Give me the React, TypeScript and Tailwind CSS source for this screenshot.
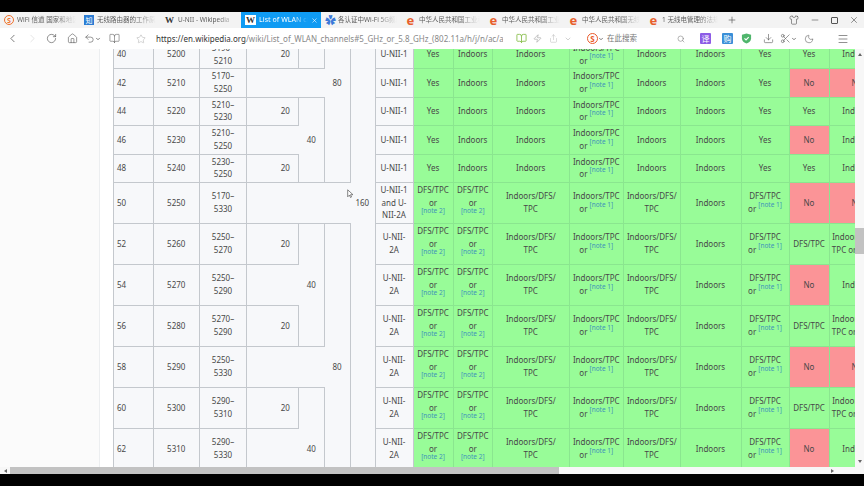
import type { ReactNode } from "react";
import {
  BookOpen,
  ChevronDown,
  ChevronLeft,
  ChevronRight,
  Download,
  Home,
  Menu,
  Minus,
  Moon,
  Plus,
  RotateCw,
  Scissors,
  Search,
  Share,
  Shirt,
  Star,
  Undo2,
  X,
  Zap,
} from "lucide-react";

const UI_FONT = "font-['Noto_Sans','Noto_Sans_CJK_SC',sans-serif]";

function SogouLogo() {
  return (
    <span className="flex h-[10px] w-[10px] shrink-0 items-center justify-center rounded-full border border-[#f0702a] text-[7px] font-bold leading-none text-[#f0702a]">
      S
    </span>
  );
}

function EdgeLogo() {
  return (
    <span className="w-[11px] shrink-0 text-center text-[13px] font-bold leading-none text-[#e8602c]">
      e
    </span>
  );
}

function WikiLogo({ boxed }: { boxed?: boolean }) {
  return (
    <span
      className={`flex h-[10px] w-[11px] shrink-0 items-center justify-center font-['Liberation_Serif',serif] text-[9px] font-bold leading-none text-[#333] ${boxed ? "bg-white" : ""}`}
    >
      W
    </span>
  );
}

const tabs: { icon: ReactNode; title: string; width: string }[] = [
  { icon: <SogouLogo />, title: "WiFi 信道 国家和地区频段", width: "w-[80px]" },
  {
    icon: (
      <span className="flex h-[10px] w-[10px] shrink-0 items-center justify-center bg-[#2b7cd3] text-[7px] leading-none text-white">
        知
      </span>
    ),
    title: "无线路由器的工作原理",
    width: "w-[80px]",
  },
  { icon: <WikiLogo />, title: "U-NII - Wikipedia", width: "w-[81px]" },
  { icon: null, title: "", width: "" },
  {
    icon: <span className="w-[10px] shrink-0 text-[11px] leading-none text-[#3b78d8]">✿</span>,
    title: "各认证中Wi-Fi 5G频段",
    width: "w-[80px]",
  },
  { icon: <EdgeLogo />, title: "中华人民共和国工业和", width: "w-[83px]" },
  { icon: <EdgeLogo />, title: "中华人民共和国工业和", width: "w-[80px]" },
  { icon: <EdgeLogo />, title: "中华人民共和国无线电", width: "w-[80px]" },
  { icon: <EdgeLogo />, title: "1 无线电管理的法规", width: "w-[78px]" },
];

function TabBar() {
  return (
    <div className={`flex h-[16px] items-center bg-[#f3f3f3] ${UI_FONT}`}>
      {tabs.map((tab, i) =>
        tab.title ? (
          <div key={i} className={`flex h-full items-center gap-[3px] pl-[4px] pr-[4px] ${tab.width}`}>
            {tab.icon}
            <span className="min-w-0 flex-1 overflow-hidden whitespace-nowrap bg-gradient-to-r from-[#555] from-65% to-transparent bg-clip-text text-[6.500px] leading-[10px] text-transparent">
              {tab.title}
            </span>
          </div>
        ) : (
          <div key={i} className="flex h-full w-[80px] items-center gap-[3px] bg-[#0f9bf3] pl-[4px] pr-[3px]">
            <WikiLogo boxed />
            <span className="min-w-0 flex-1 overflow-hidden whitespace-nowrap bg-gradient-to-r from-white from-70% to-transparent bg-clip-text text-[7px] font-medium leading-[10px] text-transparent">
              List of WLAN channels
            </span>
            <X className="h-[7px] w-[7px] shrink-0 text-white" strokeWidth={2} />
          </div>
        ),
      )}
      <Plus className="ml-[5px] h-[10px] w-[10px] text-[#555]" strokeWidth={1.6} />
      <div className="ml-auto flex items-center gap-[11px] pr-[5px] text-[#555]">
        <Shirt className="h-[10px] w-[10px]" strokeWidth={1.5} />
        <Minus className="h-[10px] w-[10px]" strokeWidth={1.5} />
        <span className="h-[7px] w-[7px] rounded-[1px] border border-[#555]" />
        <X className="h-[10px] w-[10px]" strokeWidth={1.5} />
      </div>
    </div>
  );
}

function ToolBar() {
  return (
    <div className={`flex h-[21px] items-center bg-white pl-[6px] text-[#555] ${UI_FONT}`}>
      <ChevronLeft className="h-[13px] w-[13px]" strokeWidth={1.4} />
      <ChevronRight className="ml-[7px] h-[13px] w-[13px] text-[#ddd]" strokeWidth={1.4} />
      <RotateCw className="ml-[7px] h-[11px] w-[11px]" strokeWidth={1.4} />
      <Home className="ml-[10px] h-[11px] w-[11px]" strokeWidth={1.3} />
      <Undo2 className="ml-[6px] h-[11px] w-[11px]" strokeWidth={1.3} />
      <ChevronDown className="h-[6px] w-[6px]" strokeWidth={3} />
      <BookOpen className="ml-[8px] h-[11px] w-[11px]" strokeWidth={1.2} />
      <Star className="ml-[16px] h-[10px] w-[10px] text-[#aaa]" strokeWidth={1.2} />
      <div className="ml-[10px] w-[347px] overflow-hidden whitespace-nowrap text-[8px] leading-[11px] text-[#888]">
        <span className="text-[#333]">https://en.wikipedia.org</span>
        /wiki/List_of_WLAN_channels#5_GHz_or_5.8_GHz_(802.11a/h/j/n/ac/ax)
      </div>
      <BookOpen className="ml-[13px] h-[11px] w-[11px] text-[#8cc152]" strokeWidth={2} />
      <Zap className="ml-[6px] h-[9px] w-[9px] text-[#999]" strokeWidth={1.5} />
      <Share className="ml-[7px] h-[9px] w-[9px] text-[#bbb]" strokeWidth={1.4} />
      <ChevronDown className="ml-[6px] h-[8px] w-[8px] text-[#aaa]" strokeWidth={1.6} />
      <span className="ml-[15px] flex h-[11px] w-[11px] items-center justify-center rounded-full border-[1.5px] border-[#ea5a2a] text-[8px] font-bold leading-none text-[#ea5a2a]">
        S
      </span>
      <ChevronDown className="h-[6px] w-[6px]" strokeWidth={3} />
      <span className="ml-[3px] w-[70px] text-[7.500px] leading-none text-[#777]">在此搜索</span>
      <Search className="h-[8px] w-[8px] text-[#777]" strokeWidth={1.6} />
      <span className="ml-[15px] flex h-[11px] w-[11px] items-center justify-center rounded-[1px] bg-[#8d5ce6] text-[8px] leading-none text-white">
        译
      </span>
      <span className="ml-[11px] flex h-[11px] w-[11px] items-center justify-center rounded-[1px] bg-[#3a8fd8] text-[8px] leading-none text-white">
        购
      </span>
      <svg viewBox="0 0 12 12" className="ml-[8px] h-[11px] w-[11px]">
        <path d="M6 .5 11 2v4c0 3-2.500 4.500-5 5.500C3.500 10.500 1 9 1 6V2z" fill="#4fb56c" />
        <path d="m3.800 5.800 1.700 1.700 2.900-3" fill="none" stroke="#fff" strokeWidth="1.300" />
      </svg>
      <Download className="ml-[11px] h-[11px] w-[11px]" strokeWidth={1.3} />
      <Scissors className="ml-[6px] h-[11px] w-[11px]" strokeWidth={1.3} />
      <ChevronDown className="h-[6px] w-[6px]" strokeWidth={3} />
      <Moon className="ml-[7px] h-[10px] w-[10px]" strokeWidth={1.3} />
      <Menu className="ml-[23px] h-[12px] w-[12px]" strokeWidth={1.3} />
    </div>
  );
}

const note = (n: number) => (
  <sup className="align-[2px] text-[6.500px] leading-none text-[#3f93b8]">[note&nbsp;{n}]</sup>
);

const indoors = "Indoors";
const indoorsTpc = (
  <>
    Indoors/TPC
    <br />
    or {note(1)}
  </>
);
const dfsNote1 = (
  <>
    DFS/TPC
    <br />
    or {note(1)}
  </>
);
const dfsNote2 = (
  <>
    DFS/TPC
    <br />
    or
    <br />
    {note(2)}
  </>
);
const indoorsDfs = (
  <>
    Indoors/DFS/
    <br />
    TPC
  </>
);
const indoorsDfsOr = (
  <>
    Indoors/DFS/
    <br />
    TPC or {note(1)}
  </>
);

const gray = "border-[#c4c8cd]";
const cellBase = `bg-[#f7f8fa] p-0 text-center ${gray}`;

function Green({ children }: { children: ReactNode }) {
  return <td className="border border-[#8ae68f] bg-[#98fc98] p-0 text-center">{children}</td>;
}

function No() {
  return <td className="border border-[#8ae68f] bg-[#fb9497] p-0 text-center">No</td>;
}

// the cells right of the width columns, and what the last two columns say
const uNii1 = (yes: boolean, key: number) => (
  <>
    <td className={`border ${cellBase}`}>U-NII-1</td>
    <Green>Yes</Green>
    <Green>{indoors}</Green>
    <Green>{indoors}</Green>
    <Green>{indoorsTpc}</Green>
    <Green>{indoors}</Green>
    <Green>{indoors}</Green>
    <Green>Yes</Green>
    {key === 42 ? <No /> : yes ? <Green>Yes</Green> : <No />}
    {key === 42 ? <No /> : <Green>{indoors}</Green>}
  </>
);

const uNii2 = (a: ReactNode, b: ReactNode, name: ReactNode = "U-NII-2A") => (
  <>
    <td className={`border px-[3px] ${cellBase}`}>{name}</td>
    <Green>{dfsNote2}</Green>
    <Green>{dfsNote2}</Green>
    <Green>{indoorsDfs}</Green>
    <Green>{indoorsTpc}</Green>
    <Green>{indoorsDfs}</Green>
    <Green>{indoors}</Green>
    <Green>{dfsNote1}</Green>
    {a}
    {b}
  </>
);

// cells in the width columns, stepped like the original table
const box20 = (
  <>
    <td className={`border-b ${cellBase}`} />
    <td className={`border-r border-b ${cellBase}`}>20</td>
  </>
);

const rows: { ch: number; freq: number; range: [string, string]; tall?: boolean; cells: ReactNode }[] = [
  {
    ch: 40,
    freq: 5200,
    range: ["5190–", "5210"],
    cells: (
      <>
        {box20}
        <td className={`border-r border-b ${cellBase}`} />
        <td className={`border-r ${cellBase}`} />
        <td rowSpan={5} className={`border-r ${cellBase}`} />
        {uNii1(true, 40)}
      </>
    ),
  },
  {
    ch: 42,
    freq: 5210,
    range: ["5170–", "5250"],
    cells: (
      <>
        <td colSpan={3} className={`border-b ${cellBase}`} />
        <td className={`border-r ${cellBase}`}>80</td>
        {uNii1(false, 42)}
      </>
    ),
  },
  {
    ch: 44,
    freq: 5220,
    range: ["5210–", "5230"],
    cells: (
      <>
        {box20}
        <td className={`border-r ${cellBase}`} />
        <td rowSpan={3} className={`border-r border-b ${cellBase}`} />
        {uNii1(true, 44)}
      </>
    ),
  },
  {
    ch: 46,
    freq: 5230,
    range: ["5210–", "5250"],
    cells: (
      <>
        <td colSpan={2} className={`border-b ${cellBase}`} />
        <td className={`border-r ${cellBase}`}>40</td>
        {uNii1(false, 46)}
      </>
    ),
  },
  {
    ch: 48,
    freq: 5240,
    range: ["5230–", "5250"],
    cells: (
      <>
        {box20}
        <td className={`border-r border-b ${cellBase}`} />
        {uNii1(true, 48)}
      </>
    ),
  },
  {
    ch: 50,
    freq: 5250,
    range: ["5170–", "5330"],
    tall: true,
    cells: (
      <>
        <td colSpan={4} className={`border-b ${cellBase}`} />
        <td className={`border-r ${cellBase}`}>160</td>
        {uNii2(<No />, <No />, "U-NII-1 and U-NII-2A")}
      </>
    ),
  },
  {
    ch: 52,
    freq: 5260,
    range: ["5250–", "5270"],
    tall: true,
    cells: (
      <>
        {box20}
        <td className={`border-r ${cellBase}`} />
        <td rowSpan={3} className={`border-r ${cellBase}`} />
        <td rowSpan={6} className={`border-r ${cellBase}`} />
        {uNii2(<Green>DFS/TPC</Green>, <Green>{indoorsDfsOr}</Green>)}
      </>
    ),
  },
  {
    ch: 54,
    freq: 5270,
    range: ["5250–", "5290"],
    tall: true,
    cells: (
      <>
        <td colSpan={2} className={`border-b ${cellBase}`} />
        <td className={`border-r ${cellBase}`}>40</td>
        {uNii2(<No />, <Green>{indoors}</Green>)}
      </>
    ),
  },
  {
    ch: 56,
    freq: 5280,
    range: ["5270–", "5290"],
    tall: true,
    cells: (
      <>
        {box20}
        <td className={`border-r border-b ${cellBase}`} />
        {uNii2(<Green>DFS/TPC</Green>, <Green>{indoorsDfsOr}</Green>)}
      </>
    ),
  },
  {
    ch: 58,
    freq: 5290,
    range: ["5250–", "5330"],
    tall: true,
    cells: (
      <>
        <td colSpan={3} className={`border-b ${cellBase}`} />
        <td className={`border-r ${cellBase}`}>80</td>
        {uNii2(<No />, <No />)}
      </>
    ),
  },
  {
    ch: 60,
    freq: 5300,
    range: ["5290–", "5310"],
    tall: true,
    cells: (
      <>
        {box20}
        <td className={`border-r ${cellBase}`} />
        <td rowSpan={2} className={`border-r ${cellBase}`} />
        {uNii2(<Green>DFS/TPC</Green>, <Green>{indoorsDfsOr}</Green>)}
      </>
    ),
  },
  {
    ch: 62,
    freq: 5310,
    range: ["5290–", "5330"],
    tall: true,
    cells: (
      <>
        <td colSpan={2} className={`border-b ${cellBase}`} />
        <td className={`border-r ${cellBase}`}>40</td>
        {uNii2(<No />, <Green>{indoors}</Green>)}
      </>
    ),
  },
];

function ChannelTable() {
  return (
    <table className="mt-[-9px] w-[771px] table-fixed border-collapse text-[8px] leading-[12.7px] text-[#484848]">
      <colgroup>
        <col className="w-[39.500px]" />
        <col className="w-[46.500px]" />
        <col className="w-[47px]" />
        <col className="w-[26px]" />
        <col className="w-[26px]" />
        <col className="w-[26px]" />
        <col className="w-[25.500px]" />
        <col className="w-[25px]" />
        <col className="w-[38px]" />
        <col className="w-[40px]" />
        <col className="w-[39.500px]" />
        <col className="w-[76.500px]" />
        <col className="w-[54.500px]" />
        <col className="w-[56.500px]" />
        <col className="w-[61px]" />
        <col className="w-[48px]" />
        <col className="w-[40px]" />
        <col className="w-[56px]" />
      </colgroup>
      <tbody>
        {rows.map((row) => (
          <tr key={row.ch} className={row.tall ? "h-[41px]" : "h-[28.400px]"}>
            <td className={`border pl-[3px] !text-left ${cellBase}`}>{row.ch}</td>
            <td className={`border ${cellBase}`}>{row.freq}</td>
            <td className={`border ${cellBase}`}>
              {row.range[0]}
              <br />
              {row.range[1]}
            </td>
            {row.cells}
          </tr>
        ))}
      </tbody>
    </table>
  );
}

function VerticalScrollbar() {
  return (
    <div className="flex w-[9px] shrink-0 flex-col items-center bg-[#f7f7f7] text-[#555]">
      <span className="mt-[4px] h-0 w-0 border-x-[2px] border-b-[3px] border-x-transparent border-b-[#666]" />
      <div className="mt-[172px] h-[26px] w-full bg-[#c2c2c2]" />
      <span className="mb-[4px] mt-auto h-0 w-0 border-x-[2px] border-t-[3px] border-x-transparent border-t-[#666]" />
    </div>
  );
}

function HorizontalScrollbar() {
  return (
    <div className="flex h-[7px] items-center bg-[#f7f7f7]">
      <span className="ml-[4px] h-0 w-0 border-y-[2px] border-r-[3px] border-y-transparent border-r-[#666]" />
      <div className="ml-[3px] h-full w-[549px] bg-[#c2c2c2]" />
      <span className="ml-auto mr-[30px] h-0 w-0 border-y-[2px] border-l-[3px] border-y-transparent border-l-[#666]" />
    </div>
  );
}

export default function App() {
  return (
    <div className={`flex h-[486px] w-[864px] flex-col overflow-hidden bg-black ${UI_FONT}`}>
      <div className="h-[12px] shrink-0" />
      <TabBar />
      <ToolBar />
      <div className="flex h-[418px] bg-white">
        <div className="relative flex min-w-0 flex-1 overflow-hidden">
          <div className="w-[100px] shrink-0 border-r border-[#eceef0] bg-[#fbfbfb]" />
          <div className="ml-[13px] shrink-0">
            <ChannelTable />
          </div>
          {/* mouse pointer left in the capture */}
          <svg viewBox="0 0 10 14" className="absolute left-[347px] top-[140px] h-[10px] w-[7px]">
            <path d="M1 1v10l2.500-2.500L5 12l1.500-.7L5 8h3.500z" fill="#fff" stroke="#555" strokeWidth="1" />
          </svg>
        </div>
        <VerticalScrollbar />
      </div>
      <HorizontalScrollbar />
      <div className="flex-1" />
    </div>
  );
}
